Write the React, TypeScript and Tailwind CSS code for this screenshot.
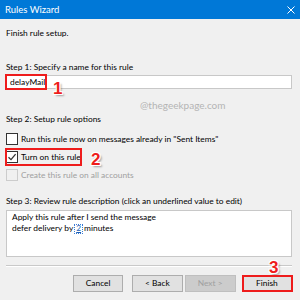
import React from "react";

const font = { fontFamily: 'Lato, "Noto Sans", sans-serif' };

function Box({ checked, disabled }: { checked?: boolean; disabled?: boolean }) {
  return (
    <div
      className={
        "w-[12px] h-[12px] border flex items-center justify-center shrink-0 " +
        (disabled ? "border-[#cccccc] bg-[#f0f0f0]" : "border-[#333333] bg-white")
      }
    >
      {checked && (
        <svg width="10" height="10" viewBox="0 0 10 10">
          <path d="M1.5 5.2 L4 7.6 L8.6 2.2" fill="none" stroke="#333" strokeWidth="1.3" />
        </svg>
      )}
    </div>
  );
}

function Mark({ n, className }: { n: string; className: string }) {
  return (
    <div
      className={"absolute text-[17px] font-bold leading-none text-[#ee1c1c] " + className}
      style={{
        fontFamily: '"Liberation Sans", Arial, sans-serif',
        textShadow: "1px 1px 0 #fff, -1px -1px 0 #fff, 1px -1px 0 #fff, -1px 1px 0 #fff, 2px 2px 2px rgba(0,0,0,0.35)",
      }}
    >
      {n}
    </div>
  );
}

export default function App() {
  return (
    <div className="w-[300px] h-[300px] overflow-hidden bg-[#f0f0f0] text-[8.4px] text-black relative whitespace-nowrap" style={font}>
      <div className="h-[19px] bg-[#0078d7] flex items-center justify-between pl-[5px] pr-[5px] text-white text-[9.5px]">
        <span className="leading-none">Rules Wizard</span>
        <svg width="8" height="8" viewBox="0 0 8 8">
          <path d="M0.5 0.5 L7.5 7.5 M7.5 0.5 L0.5 7.5" stroke="#fff" strokeWidth="1" />
        </svg>
      </div>

      <div className="pl-[6px] pr-[8px]">
        <div className="mt-[7px] h-[14px] leading-[14px]">Finish rule setup.</div>

        <div className="mt-[20px] h-[14px] leading-[14px]">Step 1: Specify a name for this rule</div>
        <div className="relative mt-[1px] -ml-[1px] h-[14px] border border-[#c8c8c8] bg-white leading-[12px] pl-[4px]">
          delayMail
          <div className="absolute left-[-1px] top-[-2px] w-[42px] h-[16px] border-2 border-[#ee1c1c]" />
          <Mark n="1" className="left-[47px] top-[4px]" />
        </div>

        <div className="relative mt-[23px] h-[14px] leading-[14px]">
          Step 2: Setup rule options
          <div className="absolute left-[134px] top-[-14px] text-[10px] text-[#b4b4b4]">@thegeekpage.com</div>
        </div>

        <div className="mt-[4px] flex flex-col">
          <div className="h-[18px] flex items-center gap-[3px]">
            <Box />
            <span>Run this rule now on messages already in "Sent Items"</span>
          </div>
          <div className="relative h-[18px] flex items-center gap-[3px]">
            <Box checked />
            <span>Turn on this rule</span>
            <div className="absolute left-[-1px] top-[0px] w-[77px] h-[18px] border-2 border-[#ee1c1c]" />
            <Mark n="2" className="left-[85px] top-[3px]" />
          </div>
          <div className="h-[18px] flex items-center gap-[3px] text-[#a0a0a0]">
            <Box disabled />
            <span>Create this rule on all accounts</span>
          </div>
        </div>

        <div className="mt-[10px] h-[14px] leading-[14px]">
          Step 3: Review rule description (click an underlined value to edit)
        </div>
        <div className="mt-[2px] h-[47px] border border-[#c8c8c8] bg-white px-[5px] pt-[1px] leading-[11px]">
          <div>Apply this rule after I send the message</div>
          <div className="flex items-center h-[11px]">
            <span>defer delivery by</span>
            <span className="mx-[1px] px-[1px] h-[10px] flex items-center border border-dotted border-[#3a7bd5] text-[#1a5fb4] underline">
              2
            </span>
            <span>minutes</span>
          </div>
        </div>

        <div className="relative mt-[8px] h-[2px] border-t border-[#c9c9c9] border-b border-b-white">
          <Mark n="3" className="left-[263px] top-[-7px]" />
        </div>

        <div className="mt-[8px] flex items-center">
          <button className="ml-[67px] w-[51px] h-[17px] bg-[#e1e1e1] border border-[#adadad] leading-none">Cancel</button>
          <button className="ml-[9px] w-[51px] h-[17px] bg-[#e1e1e1] border border-[#adadad] leading-none">&lt; Back</button>
          <button className="ml-[2px] w-[52px] h-[17px] bg-[#cccccc] border border-[#bfbfbf] text-[#a0a0a0] leading-none">Next &gt;</button>
          <button className="relative ml-[6px] w-[51px] h-[17px] bg-[#e1e1e1] border border-[#adadad] leading-none">
            Finish
            <div className="absolute -left-[1px] -top-[1px] w-[51px] h-[17px] border-2 border-[#ee1c1c]" />
          </button>
        </div>
      </div>
    </div>
  );
}
